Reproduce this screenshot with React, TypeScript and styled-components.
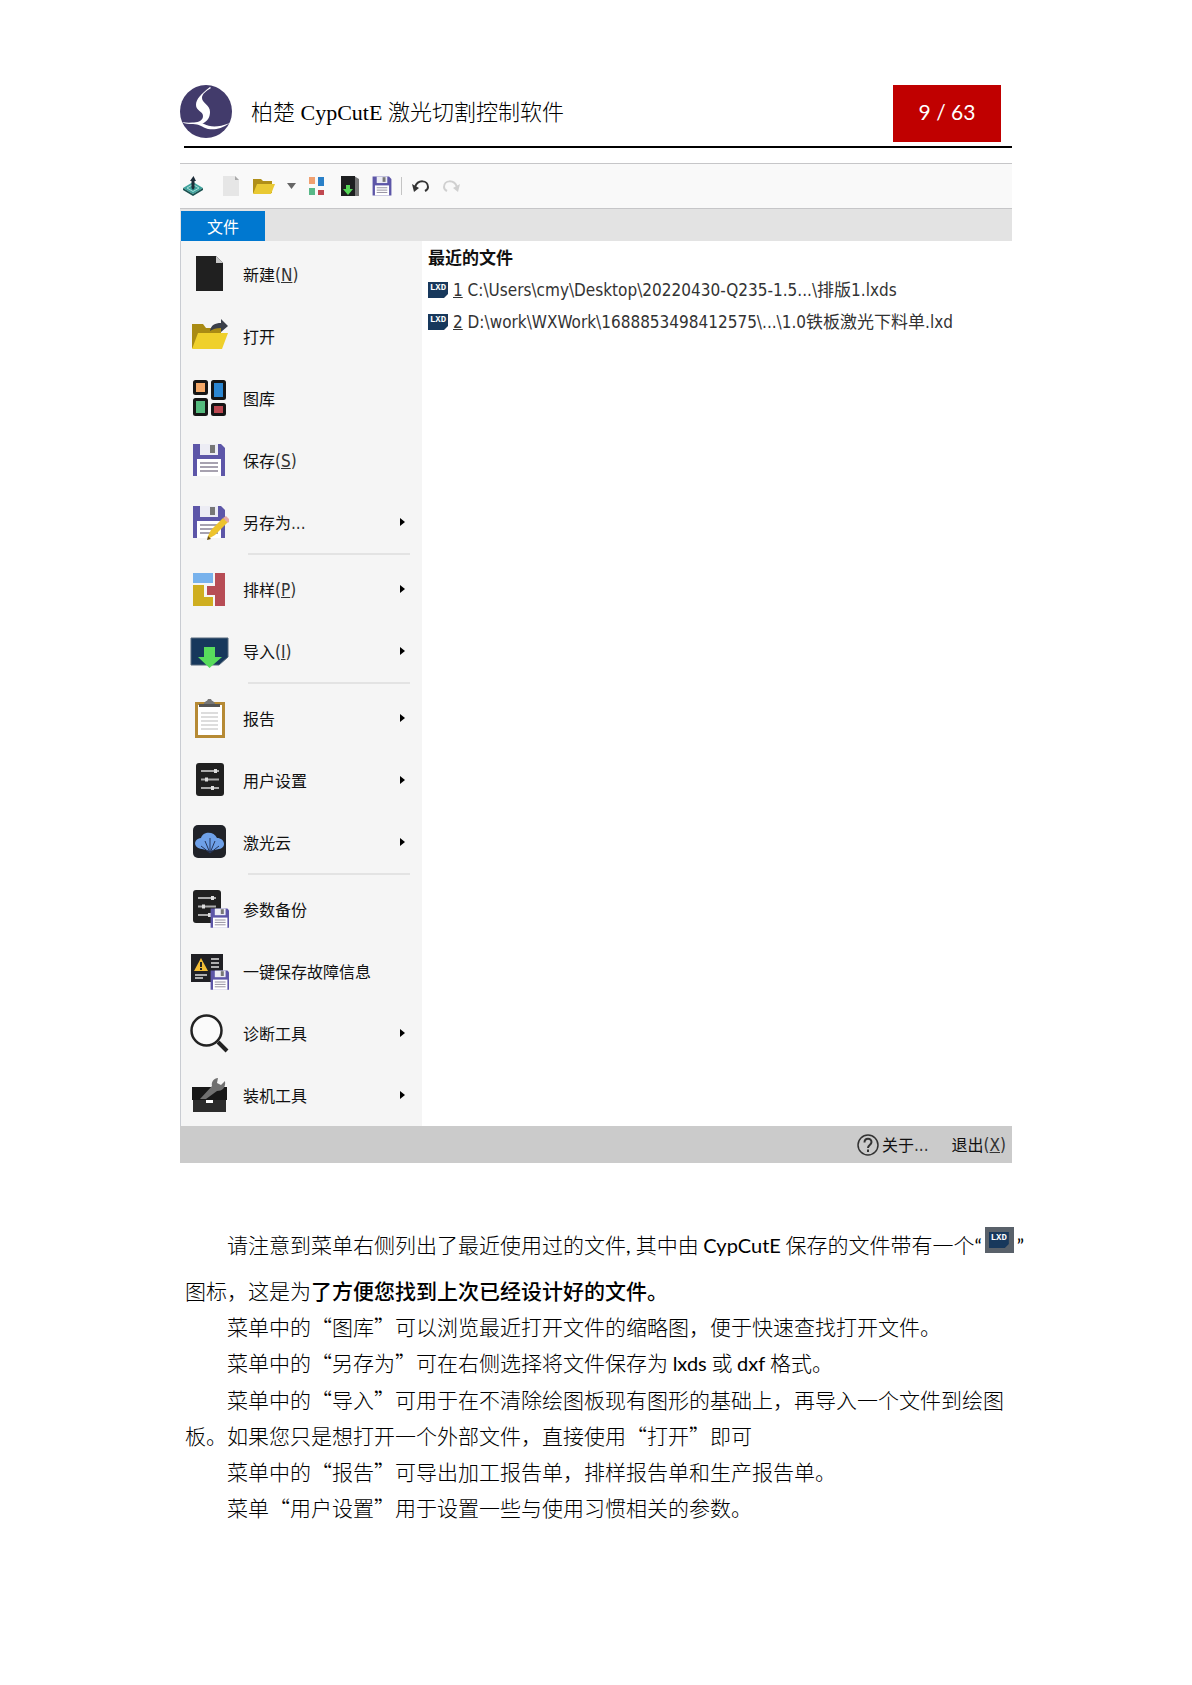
import React from "react";
import styled, { createGlobalStyle } from "styled-components";

const uiFont = `"DejaVu Sans Condensed", "Noto Sans CJK SC", sans-serif`;
const uiCjkFont = `"Noto Sans CJK SC", sans-serif`;

const GlobalStyle = createGlobalStyle`
  * { box-sizing: border-box; }
  body { margin: 0; background: #fff; color: #000; }
  button { border: 0; background: none; margin: 0; padding: 0; color: inherit; cursor: pointer; }
  svg { display: block; flex: none; }
`;

const Page = styled.div`
  max-width: 832px;
  margin: 0 auto;
  padding: 85px 0 120px;
`;

const Header = styled.header`
  display: flex;
  align-items: flex-start;
  height: 61px;
`;

const DocTitle = styled.h1`
  flex: 1;
  margin: 0 0 0 19px;
  font: 400 22px/50px "Liberation Serif", "Noto Sans CJK SC", serif;
  white-space: nowrap;
`;

const Cjk = styled.span`
  font-family: "Noto Sans CJK SC", sans-serif;
  font-weight: 300;
`;

const PageNumber = styled.div`
  width: 108px;
  margin-right: 11px;
  background: #c00000;
  color: #fff;
  font: 400 21px/54px Lato, sans-serif;
  height: 57px;
  text-align: center;
`;

const Rule = styled.hr`
  border: 0;
  height: 2px;
  margin: 0 0 0 4px;
  background: #000;
`;

const Shot = styled.section`
  margin-top: 15px;
  font: 400 16px/24px ${uiCjkFont};
  color: #111;
`;

const Toolbar = styled.div`
  display: flex;
  align-items: center;
  height: 45px;
  padding-left: 2px;
  border-top: 1px solid #c6c6c8;
  background: #f9f9f9;
`;

const ToolButton = styled.button<{ $gap: number }>`
  display: flex;
  margin-right: ${(p) => p.$gap}px;
`;

const ToolDivider = styled.span`
  width: 1px;
  height: 18px;
  margin-right: 10px;
  background: #c4c4c4;
`;

const TabRow = styled.div`
  display: flex;
  height: 33px;
  padding: 2px 0 0 1px;
  border-top: 1px solid #c6c6c8;
  background: #e3e3e3;
`;

const Tab = styled.button`
  width: 84px;
  background: #0078d0;
  color: #fff;
  font: 400 16px/28px ${uiCjkFont};
`;

const Body = styled.div`
  display: flex;
  align-items: stretch;
  border-left: 1px solid #c9ccd2;
`;

const Menu = styled.nav`
  flex: none;
  width: 241px;
  padding: 2px 0 0;
  background: #f5f5f5;
`;

const MenuItem = styled.button`
  display: flex;
  align-items: center;
  width: 100%;
  height: 62px;
  padding: 0 17px 0 8px;
  font: 400 16px/24px ${uiCjkFont};
  text-align: left;
`;

const MenuLabel = styled.span`
  flex: 1;
  margin-left: 14px;
`;

const Latin = styled.span`
  font-family: ${uiFont};
  font-size: 17px;
  color: #333;
`;

const Separator = styled.hr`
  height: 5px;
  margin: 0 12px 0 67px;
  border: 0;
  border-top: 2px solid #e3e3e3;
`;

const Recent = styled.div`
  flex: 1;
  min-width: 0;
  padding: 4px 0 0 6px;
`;

const RecentTitle = styled.h2`
  margin: 0 0 5px;
  font: 700 17px/24px ${uiCjkFont};
`;

const RecentFile = styled.a`
  display: flex;
  align-items: center;
  height: 32px;
  font: 400 17px/24px ${uiFont};
  color: #333;
  text-decoration: none;
  white-space: pre;
`;

const FileName = styled.span`
  margin-left: 5px;
`;

const Badge = styled.span`
  display: block;
  width: 20px;
  height: 16px;
  background: #17385c;
  color: #fff;
  font: 700 9px/13px "Liberation Mono", monospace;
  text-align: center;
  text-indent: 0;
  clip-path: polygon(0 0, 100% 0, 100% 75%, 80% 100%, 0 100%);
`;

const BadgeFrame = styled.span`
  display: inline-block;
  overflow: hidden;
  width: 29px;
  height: 26px;
  margin: 0 3px;
  padding: 5px 4px;
  background: #59616a;
  line-height: 16px;
`;

const Footer = styled.footer`
  display: flex;
  align-items: center;
  justify-content: flex-end;
  gap: 23px;
  height: 37px;
  padding-right: 6px;
  background: #cbcbcb;
`;

const FooterButton = styled.button`
  display: flex;
  align-items: center;
  gap: 3px;
  font: 400 16px/24px ${uiCjkFont};
`;

const Prose = styled.article`
  padding: 54px 0 0 5px;
  font: 300 21px/36px "Noto Sans CJK SC", sans-serif;
`;

const Para = styled.p<{ $lead?: boolean; $flush?: boolean }>`
  margin: 0;
  text-indent: ${(p) => (p.$flush ? "0" : "42px")};
  height: ${(p) => (p.$lead ? "55px" : "auto")};
  line-height: ${(p) => (p.$lead ? "55px" : "36px")};
  white-space: nowrap;
`;

const Word = styled.span`
  font-family: Lato, sans-serif;
  font-weight: 400;
  font-size: 20px;
`;

const Strong = styled.strong`
  font-weight: 500;
`;

const Logo = () => (
  <svg width="52" height="53" viewBox="0 0 52 53">
    <ellipse cx="26" cy="26.500" rx="26" ry="26.500" fill="#423b6b" />
    <path d="M30 2C21 9 16 14 16 20c0 6 7 6 7 11 0 4-4 6-9 7l8 1c6-3 8-7 8-12 0-7-8-9-8-14 0-4 4-7 9-10z" fill="#fff" />
    <path d="M2 37c8 2 15-1 22 2 6 3 13 4 26-1-9 6-15 7-22 6-6-2-9-5-15-5-4 0-8 0-11-2z" fill="#fff" />
  </svg>
);

const Floppy = ({ size = 34 }: { size?: number }) => (
  <svg width={size} height={size} viewBox="0 0 34 34">
    <FloppyShape />
  </svg>
);

const FloppyShape = () => (
  <g>
    <path d="M1 1h28l4 4v28H1z" fill="#5d56a8" />
    <path d="M8 1h18v11H8z" fill="#ececf4" />
    <path d="M18 2h5v8h-5z" fill="#777" />
    <path d="M5 16h24v17H5z" fill="#fff" />
    <path d="M8 20h18M8 24h18M8 28h18" stroke="#8a8496" strokeWidth="1.500" />
  </g>
);

const Slab = () => (
  <g>
    <rect x="0" y="0" width="28" height="33" rx="3" fill="#202020" />
    <path d="M5 8h18M5 16.500h18M5 25h18" stroke="#aaa" strokeWidth="1.800" />
    <path d="M18 8h3M9 16.500h3M15 25h3" stroke="#ddd" strokeWidth="4" />
  </g>
);

const Frame = ({ children }: { children: React.ReactNode }) => (
  <svg width="40" height="40" viewBox="0 0 40 40">
    {children}
  </svg>
);

const icons: Record<string, React.ReactNode> = {
  blank: (
    <Frame>
      <path d="M7 2h20l7 7v28H7z" fill="#202020" />
      <path d="M27 2v7h7z" fill="#c8c8c8" />
    </Frame>
  ),
  open: (
    <Frame>
      <path d="M3 8h11l3 4h15v20H3z" fill="#a98b14" />
      <path d="M9 17h30l-6 16H3z" fill="#efd02b" />
      <path d="M21 15c1-6 5-8 11-8V3l7 7-7 6v-4c-5 0-8 1-11 3z" fill="#3a3f4a" />
    </Frame>
  ),
  gallery: (
    <Frame>
      <g stroke="#151515" strokeWidth="3">
        <rect x="5.500" y="3.500" width="12" height="12" rx="1" fill="#f4a868" />
        <rect x="23.500" y="3.500" width="12" height="17" rx="1" fill="#2b86d1" />
        <rect x="5.500" y="21.500" width="12" height="15" rx="1" fill="#55bb7e" />
        <rect x="23.500" y="26.500" width="12" height="10" rx="1" fill="#bb4750" />
      </g>
    </Frame>
  ),
  save: (
    <Frame>
      <g transform="translate(3 3)"><FloppyShape /></g>
    </Frame>
  ),
  saveAs: (
    <Frame>
      <g transform="translate(3 3)"><FloppyShape /></g>
      <path d="M19 34l3-6 12-12 5 4-13 13-7 4z" fill="#edc32d" />
      <path d="M34 16l3-2 4 4-2 3z" fill="#e5a9a4" />
      <path d="M19 34l-1 4 4-1z" fill="#6b5010" />
    </Frame>
  ),
  nest: (
    <Frame>
      <path d="M4 4h20v10H4z" fill="#78b2ec" />
      <path d="M26 4h10v33H26V26h-8v-9h8z" fill="#b74c55" />
      <path d="M4 16h11v12h9v9H4z" fill="#cfae20" />
    </Frame>
  ),
  importFile: (
    <Frame>
      <path d="M2 7h37v19l-9 8H2z" fill="#17385c" stroke="#56697c" />
      <path d="M15 16h11v10h7L20.500 37 9 26h6z" fill="#58dc5c" />
    </Frame>
  ),
  report: (
    <Frame>
      <rect x="7.500" y="5.500" width="27" height="33" fill="#fff" stroke="#b68a34" strokeWidth="3" />
      <path d="M10 6h21v3H10z" fill="#555" />
      <path d="M15 6c0-3 3-2 4-5h3c1 3 4 2 4 5z" fill="#777" />
      <path d="M12 15h17M12 19h17M12 23h17M12 27h17M12 31h17" stroke="#bbb" />
    </Frame>
  ),
  settings: (
    <Frame>
      <g transform="translate(7 3)"><Slab /></g>
    </Frame>
  ),
  cloud: (
    <Frame>
      <rect x="4" y="3" width="33" height="33" rx="5" fill="#202228" />
      <path d="M13 27c-9-1-9-10-1-11 2-7 13-7 16 0 8 0 10 10 2 11l-9 2z" fill="#6ea0e8" />
      <path d="M21 31l-9-7M21 31l-5-12M21 31V16M21 31l5-12M21 31l9-7" stroke="#26375c" />
    </Frame>
  ),
  backup: (
    <Frame>
      <g transform="translate(4 1)"><Slab /></g>
      <g transform="translate(21 19) scale(.6)"><FloppyShape /></g>
    </Frame>
  ),
  fault: (
    <Frame>
      <rect x="2" y="3" width="32" height="28" fill="#202024" />
      <path d="M12 7l7 13H5z" fill="#f3bd35" />
      <path d="M12 11v5M12 17v2" stroke="#222" strokeWidth="2" />
      <path d="M22 8h8M22 12h8M22 16h8M6 24h12M6 27h8" stroke="#ddd" strokeWidth="1.500" />
      <g transform="translate(21 19) scale(.6)"><FloppyShape /></g>
    </Frame>
  ),
  diagnose: (
    <Frame>
      <circle cx="17.500" cy="17.500" r="15" fill="#fafafa" stroke="#222" strokeWidth="2.500" />
      <path d="M29 29l9 9" stroke="#222" strokeWidth="4" />
    </Frame>
  ),
  toolbox: (
    <Frame>
      <path d="M3 12h35v13H3z" fill="#181818" />
      <path d="M4 25h33v12H4z" fill="#2c2c2c" />
      <path d="M11 24l12-13c-1-4 2-8 6-8l-1 5 4 2 4-4c1 7-3 10-8 10l-11 8z" fill="#707070" />
      <path d="M17 25h7v3h-7z" fill="#fff" />
    </Frame>
  ),
};

const Arrow = () => (
  <svg width="5" height="8" viewBox="0 0 5 8">
    <path d="M0 0l5 4-5 4z" fill="#000" />
  </svg>
);

type Entry = { icon: string; text: string; more?: boolean; accel?: string; sub?: boolean; endsGroup?: boolean };

const entries: Entry[] = [
  { icon: "blank", text: "新建", accel: "N" },
  { icon: "open", text: "打开" },
  { icon: "gallery", text: "图库" },
  { icon: "save", text: "保存", accel: "S" },
  { icon: "saveAs", text: "另存为", more: true, sub: true, endsGroup: true },
  { icon: "nest", text: "排样", accel: "P", sub: true },
  { icon: "importFile", text: "导入", accel: "I", sub: true, endsGroup: true },
  { icon: "report", text: "报告", sub: true },
  { icon: "settings", text: "用户设置", sub: true },
  { icon: "cloud", text: "激光云", sub: true, endsGroup: true },
  { icon: "backup", text: "参数备份" },
  { icon: "fault", text: "一键保存故障信息" },
  { icon: "diagnose", text: "诊断工具", sub: true },
  { icon: "toolbox", text: "装机工具", sub: true },
];

const Accel = ({ letter }: { letter: string }) => (
  <Latin>
    (<u>{letter}</u>)
  </Latin>
);

const QuickTools = () => (
  <Toolbar>
    <ToolButton $gap={18} aria-label="CypCutE">
      <svg width="22" height="22" viewBox="0 0 22 22">
        <path d="M1 13l10-6 10 6-10 6z" fill="#3fa39d" />
        <path d="M1 13l10 6 10-6v2l-10 6-10-6z" fill="#19514f" />
        <path d="M5 13l6-3.500 6 3.500-6 3.500z" fill="none" stroke="#a5dcd6" />
        <path d="M9.500 13V6H8l3.500-5L14 6h-1.500v7l-1.500 2z" fill="#1c2c38" />
      </svg>
    </ToolButton>
    <ToolButton $gap={13} aria-label="新建">
      <svg width="18" height="22" viewBox="0 0 18 22">
        <path d="M1 1h12l4 4v16H1z" fill="#e6e6e6" />
        <path d="M13 1v4h4z" fill="#aaa" />
      </svg>
    </ToolButton>
    <ToolButton $gap={12} aria-label="打开">
      <svg width="22" height="18" viewBox="0 0 22 18">
        <path d="M0 2h8l2 2h9v12H0z" fill="#b08f18" />
        <path d="M4 7h18l-4 10H0z" fill="#e9c933" />
      </svg>
    </ToolButton>
    <ToolButton $gap={12} aria-label="打开选项">
      <svg width="9" height="6" viewBox="0 0 9 6">
        <path d="M0 0h9L4.500 6z" fill="#666" />
      </svg>
    </ToolButton>
    <ToolButton $gap={16} aria-label="图库">
      <svg width="17" height="20" viewBox="0 0 17 20">
        <path d="M1 1h6v7H1z" fill="#f0a070" />
        <path d="M10 1h6v9h-6z" fill="#2a80c8" />
        <path d="M1 12h6v7H1z" fill="#58b888" />
        <path d="M10 14h6v5h-6z" fill="#c04850" />
      </svg>
    </ToolButton>
    <ToolButton $gap={13} aria-label="导入">
      <svg width="18" height="22" viewBox="0 0 18 22">
        <path d="M13 1l5 3v17h-5z" fill="#777" />
        <path d="M0 1h14v20H0z" fill="#1d1f20" />
        <path d="M5 10h4v4h3l-5 6-5-6h3z" fill="#55d657" />
      </svg>
    </ToolButton>
    <ToolButton $gap={9} aria-label="保存">
      <Floppy size={20} />
    </ToolButton>
    <ToolDivider />
    <ToolButton $gap={12} aria-label="撤销">
      <svg width="18" height="16" viewBox="0 0 18 16">
        <path d="M3 9c3-8 13-7 13 0 0 2-1 3-3 4" fill="none" stroke="#333" strokeWidth="2" />
        <path d="M0 6l7 4-5 4z" fill="#333" />
      </svg>
    </ToolButton>
    <ToolButton $gap={0} aria-label="重做">
      <svg width="18" height="16" viewBox="0 0 18 16">
        <path d="M15 9C12 1 2 2 2 9c0 2 1 3 3 4" fill="none" stroke="#d0d0d0" strokeWidth="2" />
        <path d="M18 6l-7 4 5 4z" fill="#d0d0d0" />
      </svg>
    </ToolButton>
  </Toolbar>
);

export default function App() {
  return (
    <Page lang="zh-CN">
      <GlobalStyle />
      <Header>
        <Logo />
        <DocTitle>
          <Cjk>柏楚</Cjk> CypCutE <Cjk>激光切割控制软件</Cjk>
        </DocTitle>
        <PageNumber>9 / 63</PageNumber>
      </Header>
      <Rule />

      <Shot>
        <QuickTools />
        <TabRow>
          <Tab>文件</Tab>
        </TabRow>
        <Body>
          <Menu>
            {entries.map((e) => (
              <React.Fragment key={e.icon}>
                <MenuItem>
                  {icons[e.icon]}
                  <MenuLabel>
                    {e.text}
                    {e.more && <Latin>...</Latin>}
                    {e.accel && <Accel letter={e.accel} />}
                  </MenuLabel>
                  {e.sub && <Arrow />}
                </MenuItem>
                {e.endsGroup && <Separator />}
              </React.Fragment>
            ))}
          </Menu>
          <Recent>
            <RecentTitle>最近的文件</RecentTitle>
            <RecentFile href="#1">
              <Badge>LXD</Badge>
              <FileName><u>1</u> C:\Users\cmy\Desktop\20220430-Q235-1.5...\排版1.lxds</FileName>
            </RecentFile>
            <RecentFile href="#2">
              <Badge>LXD</Badge>
              <FileName><u>2</u> D:\work\WXWork\1688853498412575\...\1.0铁板激光下料单.lxd</FileName>
            </RecentFile>
          </Recent>
        </Body>
        <Footer>
          <FooterButton>
            <svg width="22" height="22" viewBox="0 0 22 22" fill="none" stroke="#333">
              <circle cx="11" cy="11" r="10" strokeWidth="1.500" />
              <path d="M7.500 8.500c0-5 7-5 7-.5 0 3-3.500 3-3.500 6" strokeWidth="2" />
              <path d="M11 15.500v2.500" strokeWidth="2" />
            </svg>
            <span>关于<Latin>...</Latin></span>
          </FooterButton>
          <FooterButton>
            <span>退出<Accel letter="X" /></span>
          </FooterButton>
        </Footer>
      </Shot>

      <Prose>
        <Para $lead>
          请注意到菜单右侧列出了最近使用过的文件<Word>, </Word>其中由 <Word>CypCutE</Word> 保存的文件带有一个<Word>“</Word>
          <BadgeFrame><Badge>LXD</Badge></BadgeFrame>
          <Word>”</Word>
        </Para>
        <Para $flush>
          图标，这是为<Strong>了方便您找到上次已经设计好的文件。</Strong>
        </Para>
        <Para>菜单中的“图库”可以浏览最近打开文件的缩略图，便于快速查找打开文件。</Para>
        <Para>菜单中的“另存为”可在右侧选择将文件保存为 <Word>lxds</Word> 或 <Word>dxf</Word> 格式。</Para>
        <Para>
          菜单中的“导入”可用于在不清除绘图板现有图形的基础上，再导入一个文件到绘图
          <br />
          板。如果您只是想打开一个外部文件，直接使用“打开”即可
        </Para>
        <Para>菜单中的“报告”可导出加工报告单，排样报告单和生产报告单。</Para>
        <Para>菜单“用户设置”用于设置一些与使用习惯相关的参数。</Para>
      </Prose>
    </Page>
  );
}
